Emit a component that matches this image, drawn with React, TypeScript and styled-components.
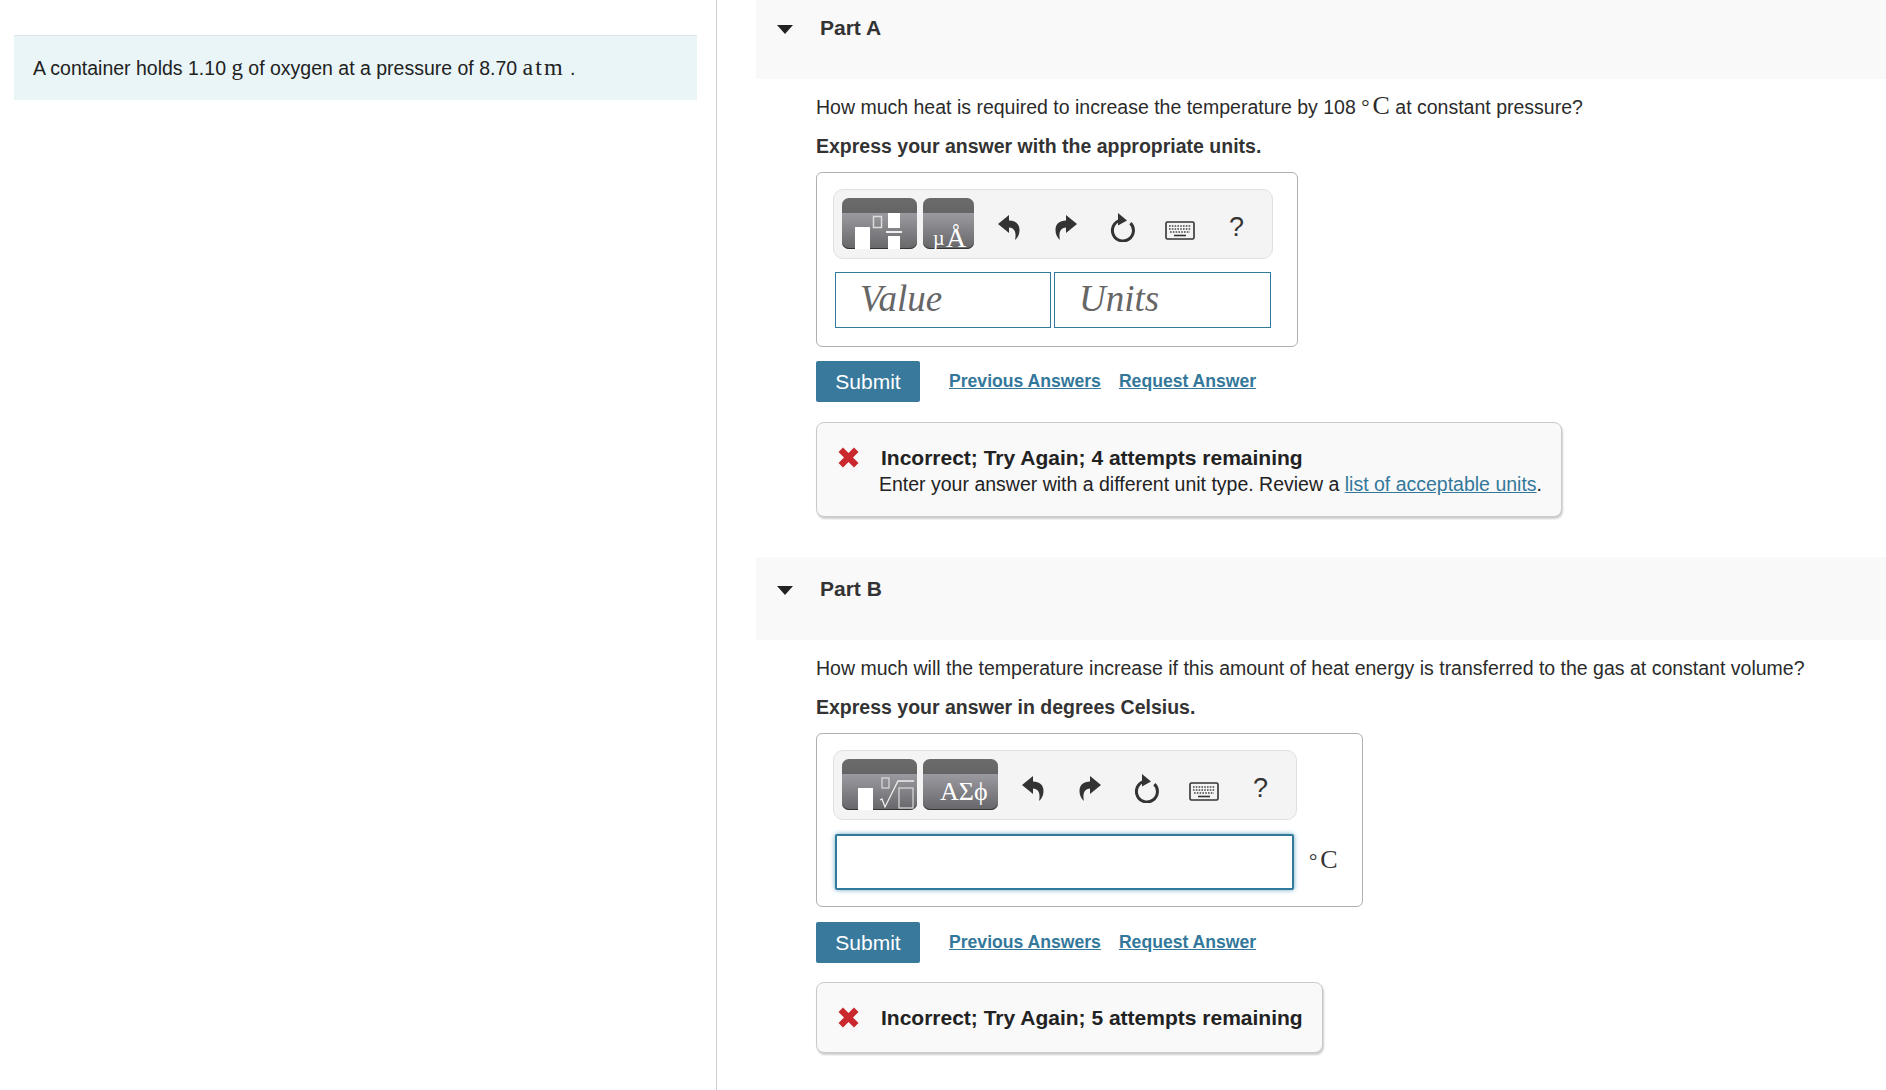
import React from "react";
import styled, { createGlobalStyle } from "styled-components";

const GlobalStyle = createGlobalStyle`
  html,
  body {
    margin: 0;
    padding: 0;
    background: #fff;
  }

  body {
    font-family: "Liberation Sans", Arial, sans-serif;
    font-size: 19.5px;
    line-height: 24px;
    color: #222;
  }
`;

const Page = styled.div`
  width: 1886px;
  height: 1090px;
  display: flex;
  overflow: hidden;
`;

const LeftColumn = styled.aside`
  width: 717px;
  height: 100%;
  flex-shrink: 0;
  box-sizing: border-box;
  padding: 35px 19px 0 14px;
  border-right: 1px solid #c8ced2;
`;

const IntroBox = styled.div`
  height: 65px;
  box-sizing: border-box;
  padding-left: 19px;
  display: flex;
  align-items: center;
  background: #e9f5f7;
  border-top: 1px solid #dde4e6;
`;

const RightColumn = styled.main`
  flex: 1;
  min-width: 0;
  padding-left: 39px;
`;

const MathText = styled.span<{ $size?: number; $spacing?: number }>`
  font-family: "Liberation Serif", "Times New Roman", serif;
  font-size: ${(props) => props.$size ?? 23}px;
  letter-spacing: ${(props) => props.$spacing ?? 0}px;
  line-height: 0;
`;

const Degree = styled.span`
  font-size: 0.8em;
  margin-right: 3px;
`;

const PartHeader = styled.header<{ $height: number; $top: number; $gap: number }>`
  height: ${(props) => props.$height}px;
  box-sizing: border-box;
  margin-top: ${(props) => props.$gap}px;
  padding: ${(props) => props.$top}px 0 0 21px;
  background: #f9f9f9;
  display: flex;
  align-items: flex-start;
`;

const Caret = styled.span`
  width: 0;
  height: 0;
  margin-top: 9px;
  border-left: 8px solid transparent;
  border-right: 8px solid transparent;
  border-top: 9px solid #222;
`;

const PartTitle = styled.h2`
  margin: 0 0 0 27px;
  font-size: 21px;
  line-height: 24px;
  font-weight: 700;
  color: #333;
`;

const PartBody = styled.section`
  padding: 16px 0 0 60px;
`;

const Question = styled.p`
  margin: 0;
  line-height: 24px;
  color: #2b2b2b;
`;

const Instruction = styled.p`
  margin: 15px 0 14px;
  line-height: 24px;
  font-weight: 700;
  color: #333;
`;

const AnswerBox = styled.div<{ $bottom: number }>`
  width: fit-content;
  padding: 16px 24px ${(props) => props.$bottom}px 16px;
  border: 1px solid #b0b0b0;
  border-radius: 6px;
`;

const Toolbar = styled.div`
  width: fit-content;
  display: flex;
  align-items: flex-start;
  padding: 8px 7px 9px 8px;
  background: #f4f4f4;
  border: 1px solid #e0e0e0;
  border-radius: 10px;
`;

const TemplateButton = styled.div<{ $width: number }>`
  width: ${(props) => props.$width}px;
  height: 51px;
  margin-right: 6px;
  border-radius: 7px;
  background: linear-gradient(
    to bottom,
    #6b6b6b 0,
    #656565 15px,
    #9a9aa0 15px,
    #67676a 100%
  );
  box-shadow: inset 0 -1px 0 #333;

  svg {
    display: block;
    overflow: visible;
  }

  text {
    font-family: "Liberation Serif", "Times New Roman", serif;
    fill: #fff;
  }
`;

const ToolSlot = styled.span<{ $drop: number }>`
  width: 57px;
  height: 51px;
  box-sizing: border-box;
  padding-top: ${(props) => props.$drop * 2}px;
  display: flex;
  align-items: center;
  justify-content: center;
  font-size: 27px;
  color: #333;
`;

const InputRow = styled.div<{ $top: number }>`
  display: flex;
  align-items: center;
  gap: 3px;
  margin: ${(props) => props.$top}px 0 0 2px;
`;

const SplitInput = styled.input`
  width: 216px;
  height: 56px;
  box-sizing: border-box;
  padding: 0 0 3px 24px;
  border: 1px solid #327a9c;
  border-radius: 0;
  outline: none;
  font-family: "Liberation Serif", "Times New Roman", serif;
  font-size: 37px;
  font-style: italic;

  &:last-child {
    width: 217px;
  }

  &::placeholder {
    color: #666;
    opacity: 1;
  }
`;

const FocusedInput = styled.input`
  width: 459px;
  height: 56px;
  box-sizing: border-box;
  border: 2px solid #327a9c;
  border-radius: 2px;
  outline: none;
  box-shadow: 0 0 5px #6ea9c4;
`;

const UnitLabel = styled.span`
  margin: -3px 0 0 12px;
  font-family: "Liberation Serif", "Times New Roman", serif;
  font-size: 26px;
  color: #333;
`;

const Actions = styled.div<{ $top: number }>`
  display: flex;
  align-items: center;
  margin-top: ${(props) => props.$top}px;
`;

const SubmitButton = styled.button`
  width: 104px;
  height: 41px;
  margin-right: 29px;
  padding: 0;
  border: none;
  border-radius: 2px;
  background: #38799c;
  color: #fff;
  font-family: "Liberation Sans", Arial, sans-serif;
  font-size: 21px;
`;

const ActionLink = styled.a`
  margin-right: 18px;
  margin-top: -2px;
  font-size: 17.6px;
  font-weight: 700;
  color: #33789b;
  text-decoration: underline;
`;

const Feedback = styled.div<{ $top: number; $bottom: number }>`
  width: fit-content;
  display: flex;
  align-items: flex-start;
  gap: 22px;
  margin-top: ${(props) => props.$top}px;
  padding: 23px 19px ${(props) => props.$bottom}px 21px;
  background: #f9f9f9;
  border: 1px solid #c9c9c9;
  border-radius: 8px;
  box-shadow: 1px 2px 2px #cfcfcf;

  svg {
    margin-top: 1px;
    flex-shrink: 0;
  }
`;

const FeedbackTitle = styled.div`
  font-size: 21px;
  line-height: 24px;
  font-weight: 700;
  color: #222;
`;

const FeedbackDetail = styled.div`
  margin: 2px 0 0 -2px;
  line-height: 24px;
  color: #222;

  a {
    color: #33789b;
    text-decoration: underline;
  }
`;

const UndoSvg = styled.svg<{ $flip?: boolean }>`
  transform: ${(props) => (props.$flip ? "scaleX(-1)" : "none")};
`;

const UndoIcon = ({ flip }: { flip?: boolean }) => (
  <UndoSvg $flip={flip} width="22" height="25" viewBox="0 0 22 25">
    <path
      d="M0 9 11 0v5.500c6.500 0 10.500 3.500 10.500 9.500 0 4-1.500 7.500-4.500 10 1-4.500 1.500-12-6-12.500V18Z"
      fill="#333"
    />
  </UndoSvg>
);

const ReloadIcon = () => (
  <svg width="26" height="29" viewBox="0 0 26 29">
    <path
      d="M20.400 10.100A10.500 10.500 0 1 1 10 7.400"
      fill="none"
      stroke="#333"
      strokeWidth="3"
    />
    <path d="M8 0l9 7.500-9 5z" fill="#333" />
  </svg>
);

const KeyboardIcon = () => (
  <svg width="30" height="19" viewBox="0 0 30 19">
    <rect x="1" y="1" width="28" height="17" rx="1.500" fill="#f4f4f4" stroke="#333" strokeWidth="1.600" />
    <path
      d="M4 5h22M4 8h22M5 11h20"
      stroke="#444"
      strokeWidth="1.600"
      strokeDasharray="1.600 1.200"
      fill="none"
    />
    <path d="M9 14.500h12" stroke="#333" strokeWidth="1.600" />
  </svg>
);

const CrossIcon = () => (
  <svg width="21" height="21" viewBox="0 0 21 21">
    <path
      d="M5 0.500 10.500 6 16 0.500 20.500 5 15 10.500 20.500 16 16 20.500 10.500 15 5 20.500 0.500 16 6 10.500 0.500 5Z"
      fill="#c9282d"
    />
  </svg>
);

const FractionGlyph = () => (
  <svg width="75" height="51" viewBox="0 0 75 51">
    <rect x="13" y="29" width="15" height="22" fill="#fff" />
    <rect x="31.500" y="18.500" width="8" height="11" fill="none" stroke="#ddd" strokeWidth="1.500" />
    <rect x="46" y="15" width="12" height="15" fill="#fff" />
    <rect x="44" y="33" width="16" height="2" fill="#eee" />
    <rect x="46" y="38" width="12" height="13" fill="#fff" />
  </svg>
);

const UnitGlyph = () => (
  <svg width="51" height="51" viewBox="0 0 51 51">
    <text x="10" y="47" fontSize="20">
      µ
    </text>
    <text x="23" y="49" fontSize="28">
      Å
    </text>
  </svg>
);

const RadicalGlyph = () => (
  <svg width="75" height="51" viewBox="0 0 75 51">
    <rect x="16" y="29" width="15" height="22" fill="#fff" />
    <rect x="40" y="19" width="7" height="10" fill="none" stroke="#ddd" strokeWidth="1.200" />
    <path d="M38 41l2-1 3 8 13-26h16" fill="none" stroke="#eee" strokeWidth="1.300" />
    <rect x="57" y="29" width="14" height="20" fill="none" stroke="#ddd" strokeWidth="1.200" />
  </svg>
);

const GreekGlyph = () => (
  <svg width="75" height="51" viewBox="0 0 75 51">
    <text x="17" y="41" fontSize="26">
      ΑΣϕ
    </text>
  </svg>
);

const ToolIcons = () => (
  <>
    <ToolSlot $drop={3.5}>
      <UndoIcon />
    </ToolSlot>
    <ToolSlot $drop={3.5}>
      <UndoIcon flip />
    </ToolSlot>
    <ToolSlot $drop={4}>
      <ReloadIcon />
    </ToolSlot>
    <ToolSlot $drop={7}>
      <KeyboardIcon />
    </ToolSlot>
    <ToolSlot $drop={3.5}>?</ToolSlot>
  </>
);

const PartActions = ({ top }: { top: number }) => (
  <Actions $top={top}>
    <SubmitButton>Submit</SubmitButton>
    <ActionLink href="#">Previous Answers</ActionLink>
    <ActionLink href="#">Request Answer</ActionLink>
  </Actions>
);

export default function App() {
  return (
    <Page>
      <GlobalStyle />
      <LeftColumn>
        <IntroBox>
          <span>
            A container holds 1.10 <MathText>g</MathText> of oxygen at a
            pressure of 8.70{" "}
            <MathText $size={24} $spacing={2}>
              atm
            </MathText>{" "}
            .
          </span>
        </IntroBox>
      </LeftColumn>
      <RightColumn>
        <PartHeader $height={79} $top={16} $gap={0}>
          <Caret />
          <PartTitle>Part A</PartTitle>
        </PartHeader>
        <PartBody>
          <Question>
            How much heat is required to increase the temperature by 108{" "}
            <MathText $size={26}>
              <Degree>°</Degree>C
            </MathText>{" "}
            at constant pressure?
          </Question>
          <Instruction>Express your answer with the appropriate units.</Instruction>
          <AnswerBox $bottom={18}>
            <Toolbar>
              <TemplateButton $width={75}>
                <FractionGlyph />
              </TemplateButton>
              <TemplateButton $width={51}>
                <UnitGlyph />
              </TemplateButton>
              <ToolIcons />
            </Toolbar>
            <InputRow $top={13}>
              <SplitInput placeholder="Value" />
              <SplitInput placeholder="Units" />
            </InputRow>
          </AnswerBox>
          <PartActions top={14} />
          <Feedback $top={20} $bottom={20}>
            <CrossIcon />
            <div>
              <FeedbackTitle>Incorrect; Try Again; 4 attempts remaining</FeedbackTitle>
              <FeedbackDetail>
                Enter your answer with a different unit type. Review a{" "}
                <a href="#">list of acceptable units</a>.
              </FeedbackDetail>
            </div>
          </Feedback>
        </PartBody>

        <PartHeader $height={83} $top={20} $gap={40}>
          <Caret />
          <PartTitle>Part B</PartTitle>
        </PartHeader>
        <PartBody>
          <Question>
            How much will the temperature increase if this amount of heat energy
            is transferred to the gas at constant volume?
          </Question>
          <Instruction>Express your answer in degrees Celsius.</Instruction>
          <AnswerBox $bottom={16}>
            <Toolbar>
              <TemplateButton $width={75}>
                <RadicalGlyph />
              </TemplateButton>
              <TemplateButton $width={75}>
                <GreekGlyph />
              </TemplateButton>
              <ToolIcons />
            </Toolbar>
            <InputRow $top={14}>
              <FocusedInput />
              <UnitLabel>
                <Degree>°</Degree>C
              </UnitLabel>
            </InputRow>
          </AnswerBox>
          <PartActions top={15} />
          <Feedback $top={19} $bottom={22}>
            <CrossIcon />
            <FeedbackTitle>Incorrect; Try Again; 5 attempts remaining</FeedbackTitle>
          </Feedback>
        </PartBody>
      </RightColumn>
    </Page>
  );
}
